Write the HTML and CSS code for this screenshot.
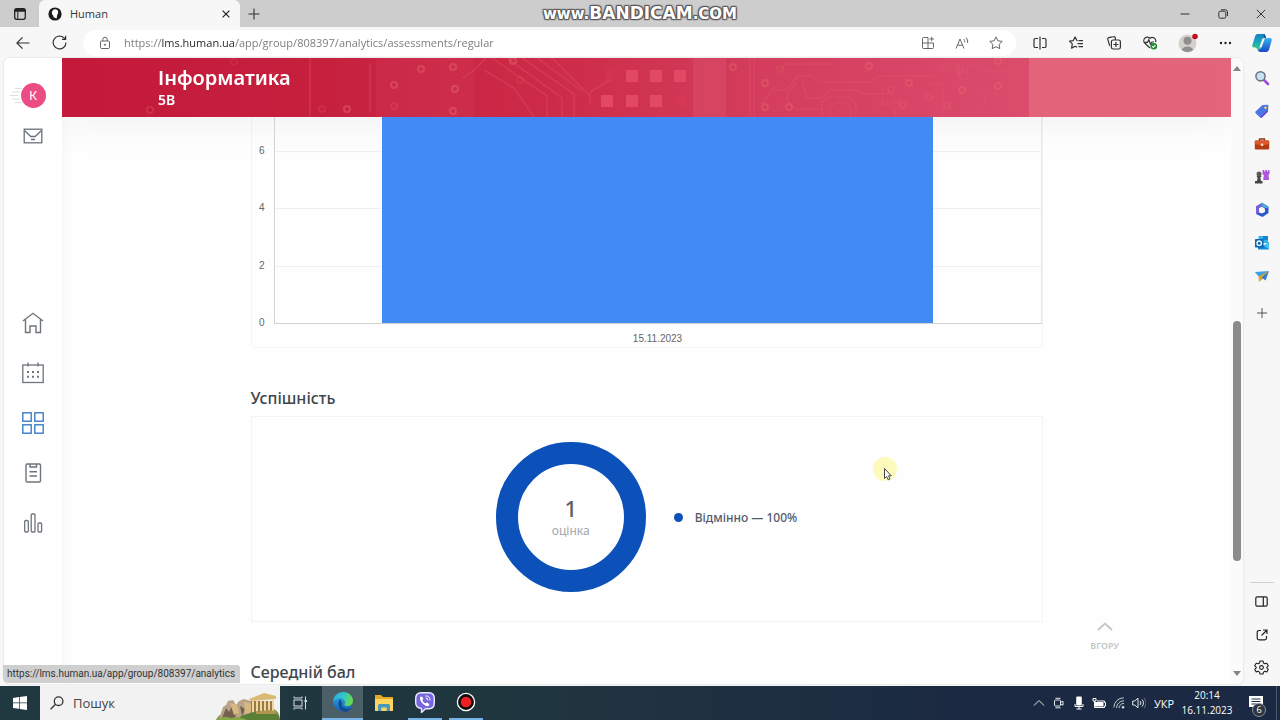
FILE: index.html
```html
<!DOCTYPE html>
<html lang="uk">
<head>
    <meta charset="UTF-8">
    <meta name="viewport" content="width=device-width, initial-scale=1.0">
    <title>Human</title>
    <link rel="stylesheet" href="styles.css">
</head>
<body>
    <div class="titlebar">
        <button class="tab-menu" aria-label="Меню вкладок">
            <svg width="14" height="14" viewBox="0 0 14 14"><rect x="1.7" y="1.7" width="10.6" height="10.6" rx="2" fill="none" stroke="#222" stroke-width="1.3"/><path d="M1.5 3.5a2 2 0 0 1 2-2h7a2 2 0 0 1 2 2v1.2h-11z" fill="#222"/><path d="M4.8 4v8" stroke="#222"/></svg>
        </button>
        <div class="tab">
            <svg width="14" height="14" viewBox="0 0 14 14"><circle cx="7" cy="7" r="6.6" fill="#1b1b1b"/><path d="M7 2.2c2.2 0 3.4 1.5 3.2 3.3-.2 1.600-1 2.100-1.200 3.300L8.700 11.400 5.600 10.300 5.400 8.700C4.300 8 3.800 7 3.900 5.500 4 3.500 5.200 2.200 7 2.200z" fill="#fff"/></svg>
            <span class="tab-title">Human</span>
            <button class="tab-close" aria-label="Закрити вкладку">
                <svg width="8" height="8" viewBox="0 0 8 8"><path d="M.6.6l6.800 6.800M7.400.6L.6 7.400" stroke="#222" stroke-width="1.200"/></svg>
            </button>
        </div>
        <button class="new-tab" aria-label="Нова вкладка">
            <svg width="12" height="12" viewBox="0 0 12 12"><path d="M6 .5v11M.5 6h11" stroke="#333" stroke-width="1.100"/></svg>
        </button>
        <div class="window-controls">
            <button aria-label="Згорнути"><svg width="10" height="10" viewBox="0 0 10 10"><path d="M.5 5h9" stroke="#333"/></svg></button>
            <button aria-label="Відновити"><svg width="10" height="10" viewBox="0 0 10 10" fill="none" stroke="#333"><rect x=".8" y="2.200" width="7" height="7" rx="1.500"/><path d="M3 .8h4.500a2 2 0 0 1 2 2V7"/></svg></button>
            <button aria-label="Закрити"><svg width="10" height="10" viewBox="0 0 10 10"><path d="M.8.800l8.400 8.400M9.200.8L.8 9.200" stroke="#333"/></svg></button>
        </div>
        <div class="watermark"><small>www.</small>BANDICAM<small>.COM</small></div>
    </div>

    <div class="toolbar">
        <button class="tool" aria-label="Назад"><svg width="14" height="14" viewBox="0 0 14 14" fill="none" stroke="#333" stroke-width="1.200"><path d="M13.500 7H1M6.500 1.300L.9 7l5.600 5.700"/></svg></button>
        <button class="tool" aria-label="Оновити"><svg width="15" height="15" viewBox="0 0 15 15" fill="none" stroke="#333" stroke-width="1.200"><path d="M14 7.500A6.400 6.400 0 1 1 11.600 2.500L13.300 4"/><path d="M13.600.7v3.600H10"/></svg></button>
        <div class="address">
            <svg width="14" height="14" viewBox="0 0 14 14" fill="none" stroke="#666"><rect x="2.500" y="5" width="9" height="7.500" rx="1.200"/><path d="M4.800 5V3.400a2.200 2.200 0 0 1 4.400 0V5"/><circle cx="7" cy="8.700" r=".6" fill="#666"/></svg>
            <input class="url" type="text" aria-label="Адреса" value="https://lms.human.ua/app/group/808397/analytics/assessments/regular">
            <button class="inner-tool" aria-label="Програми"><svg width="14" height="14" viewBox="0 0 14 14" fill="none" stroke="#666"><path d="M7 1.500H2.500a1 1 0 0 0-1 1v9a1 1 0 0 0 1 1h9a1 1 0 0 0 1-1V7H1.500M7 1.500v11M10.700.8v4.400M8.500 3h4.400"/></svg></button>
            <button class="inner-tool" aria-label="Читати вголос"><svg width="14" height="14" viewBox="0 0 14 14" fill="none" stroke="#666"><path d="M1 12.500L5 3l4 9.500M2.400 9.200h5.200M8.800 3.200a4 4 0 0 1 1 3M11 1.500a6.500 6.500 0 0 1 1.700 5.500"/></svg></button>
            <button class="inner-tool" aria-label="До вибраного"><svg width="14" height="14" viewBox="0 0 14 14" fill="none" stroke="#666"><path d="M7 .9l1.900 3.900 4.300.6-3.100 3 .7 4.300L7 10.700l-3.800 2 .7-4.300-3.100-3 4.300-.6z" stroke-linejoin="round"/></svg></button>
        </div>
        <div class="tools">
            <button class="tool" aria-label="Розділити екран"><svg width="14" height="14" viewBox="0 0 14 14" fill="none" stroke="#333" stroke-width="1.200"><path d="M5 2.500H2.300a1.300 1.300 0 0 0-1.300 1.300v6.400a1.300 1.300 0 0 0 1.300 1.300H5M9 2.500h2.700A1.300 1.300 0 0 1 13 3.800v6.400a1.300 1.300 0 0 1-1.300 1.300H9M7 .5v13"/></svg></button>
            <button class="tool" aria-label="Вибране"><svg width="15" height="14" viewBox="0 0 15 14" fill="none" stroke="#333" stroke-width="1.200"><path d="M8.600 4.600L7.900 4.500 6.100.9 4.300 4.600l-3.800.5 2.800 2.800-.7 4.200L6.100 10.300l2 1M9.500 4.600H14M8.500 7.600H14M9.500 10.600H14" stroke-linejoin="round"/></svg></button>
            <button class="tool" aria-label="Колекції"><svg width="14" height="14" viewBox="0 0 14 14" fill="none" stroke="#333" stroke-width="1.200"><rect x="4.400" y="4" width="9" height="9" rx="1.800"/><path d="M2.700 9.800L.8 3.400a1.500 1.500 0 0 1 1-1.800L6.500.7a1.500 1.500 0 0 1 1.800 1L8.500 4M8.900 6v5M6.400 8.500h5"/></svg></button>
            <button class="tool" aria-label="Основні засоби"><svg width="15" height="14" viewBox="0 0 15 14" fill="none" stroke="#333" stroke-width="1.200"><path d="M7 12L1.700 7A3.500 3.500 0 0 1 7 2.300 3.500 3.500 0 0 1 12.600 6M2 6.300h2.500l1.300-2.500L7.500 8.300 9 6h2"/><circle cx="10.800" cy="10.200" r="3.300" fill="#1b8a2b" stroke="none"/><path d="M9.200 10.200l1.200 1.200 2-2.200" stroke="#fff"/></svg></button>
            <button class="tool" aria-label="Профіль"><svg width="20" height="20" viewBox="0 0 20 20"><circle cx="9.500" cy="10.500" r="9" fill="#d4d1cd"/><circle cx="9.500" cy="7.800" r="4" fill="#918f8d"/><path d="M3.800 17a5.900 4.800 0 0 1 11.400 0 8.800 8.800 0 0 1-11.400 0z" fill="#918f8d"/><circle cx="17" cy="3.500" r="2.800" fill="#c50f1f"/></svg></button>
            <button class="tool" aria-label="Налаштування та інше"><svg width="14" height="4" viewBox="0 0 14 4" fill="#222"><circle cx="3" cy="2" r="1.200"/><circle cx="7.500" cy="2" r="1.200"/><circle cx="12" cy="2" r="1.200"/></svg></button>
            <button class="tool" aria-label="Copilot">
                <svg width="20" height="20" viewBox="0 0 20 20">
                    <defs>
                        <linearGradient id="cop-a" x2="0" y2="1"><stop stop-color="#187fc6"/><stop offset=".5" stop-color="#19a9bd"/><stop offset="1" stop-color="#3cc97a"/></linearGradient>
                        <linearGradient id="cop-b" x2="0" y2="1"><stop stop-color="#37b4ee"/><stop offset="1" stop-color="#1747c9"/></linearGradient>
                    </defs>
                    <path d="M5.500 1h6c1.500 0 1.300 1.200 1.600 2.500L8.500 15.500C8 17 7 18 5.500 16.500L4 14.500H2C.2 14.500 0 13 .5 11.500l2.500-8C3.500 2 4 1 5.500 1z" fill="url(#cop-a)"/>
                    <path d="M12.500 5H18c1.800 0 2 1.500 1.500 3l-2.300 8c-.5 1.800-1.500 3-3.200 3H8.500C7 19 6 18 5.500 16.500c1.700.8 2.700 0 3.200-1.500z" fill="url(#cop-b)"/>
                    <path d="M10.500 5.500l2.500-.5-3.500 9.500H7.300z" fill="#f7f7f7"/>
                    <path d="M11.500 1c1.700 0 2 1 2.500 4h-2z" fill="#164f9f"/>
                </svg>
            </button>
        </div>
    </div>

    <div class="workspace">
        <div class="page">
            <nav class="side-nav">
                <a class="profile" href="#" aria-label="Профіль">
                    <svg class="speed" width="12" height="17" viewBox="0 0 12 17" stroke="#dedede"><path d="M5 1.500h7M2 5h8M0 8.500h8M2 12h8M5 15.500h6"/></svg>
                    <span class="avatar">К</span>
                </a>
                <a class="mail" href="#" aria-label="Повідомлення"><svg width="20" height="16" viewBox="0 0 20 16" fill="none" stroke="#69727b" stroke-width="1.300"><rect x="1.200" y="1.200" width="17.600" height="13.600"/><path d="M1.500 2.500L7.800 8.500h4.400l6.300-6M8 11.500h4"/></svg></a>
                <ul class="nav-list">
                    <li><a href="#" aria-label="Головна"><svg width="22" height="22" viewBox="0 0 22 22" fill="none" stroke="#6d747b" stroke-width="1.400"><path d="M1 9L11 1.300 21 9M3.500 7.500v13H8V14h6v6.500h4.500v-13"/></svg></a></li>
                    <li><a href="#" aria-label="Календар"><svg width="22" height="22" viewBox="0 0 22 22" fill="none" stroke="#6d747b" stroke-width="1.300"><rect x=".8" y="3" width="20.400" height="17.500"/><path d="M6 .5v4M16 .5v4"/><path d="M5 10h2M10 10h2M15 10h2M5 14.700h2M10 14.700h2M15 14.700h2" stroke-width="2"/></svg></a></li>
                    <li><a href="#" aria-label="Групи"><svg width="22" height="22" viewBox="0 0 22 22" fill="none" stroke="#3b7cca" stroke-width="1.400"><rect x=".8" y=".8" width="8.400" height="8.400"/><rect x="12.800" y=".8" width="8.400" height="8.400"/><rect x=".8" y="12.800" width="8.400" height="8.400"/><rect x="12.800" y="12.800" width="8.400" height="8.400"/></svg></a></li>
                    <li><a href="#" aria-label="Завдання"><svg width="22" height="22" viewBox="0 0 22 22" fill="none" stroke="#6d747b" stroke-width="1.400"><rect x="4" y="2" width="14.500" height="18" rx="1.200"/><path d="M8 2v3h6.500V2M7.500 9.800h7.500M7.500 14h7.500"/></svg></a></li>
                    <li><a href="#" aria-label="Аналітика"><svg width="22" height="22" viewBox="0 0 22 22" fill="none" stroke="#6d747b" stroke-width="1.300"><rect x="2.700" y="8.500" width="3.600" height="11.500" rx="1"/><rect x="9.200" y="2" width="3.800" height="18" rx="1"/><rect x="16" y="11" width="3.600" height="9" rx="1"/></svg></a></li>
                </ul>
            </nav>

            <main class="content">
                <header class="banner">
                    <svg class="circuit" viewBox="0 0 1169 59" preserveAspectRatio="xMinYMid slice" fill="none">
                        <path d="M314 0h98v59h-98z" fill="#dc5271" opacity=".15"/>
                        <path d="M631 0h33v59h-33z" fill="#dc5271" opacity=".45"/>
                        <path d="M686 0h281v59H686z" fill="#d83c60" opacity=".35"/>
                        <path d="M967 0h202v59H967z" fill="#e4667c" opacity=".8"/>
                        <g stroke="#e05a6c" stroke-width="1.500" opacity=".35">
                            <path d="M248 0v59M308 5v50M688 0v59M692 0v59M948 0v59M955 0v59"/>
                            <path d="M422 12l30 18 20 29M430 0l55 38v21M445 0l55 40v19M460 0l52 36v23M475 0l45 33"/>
                            <path d="M412 12l12-12M412 12l-12 8M490 0l38 38M528 34l20-12M528 34v12"/>
                            <path d="M700 46l10-14h14l12-14h14l8 6h50l8-6h58l9-12h14v15h8V8h14l5 5h22"/>
                            <path d="M718 11l6-5h46M735 25l-10 10v8l8 8h25M740 23l5 17h14l10-8h25l10 4h26l5 8M820 30v15h15l8 6-8 6"/>
                            <path d="M760 59V45l6-6h22l6 8v12M768 59V49l6-4h10l5 6v8M861 26h20v33M817 47h14l3 12M838 40l-2 12M908 33h15v12l-5 6h-16l-4 8M936 33l-5 17-5 9"/>
                        </g>
                        <g stroke="#e5636a" stroke-width="2" opacity=".5">
                            <circle cx="88" cy="52" r="3" fill="#a81c2c" opacity=".6"/><circle cx="172" cy="4" r="3" opacity=".3"/><circle cx="210" cy="18" r="3" opacity=".3"/><circle cx="260" cy="51" r="3" opacity=".4"/><circle cx="285" cy="51" r="3"/><circle cx="332" cy="27" r="3"/><circle cx="332" cy="48" r="3" opacity=".5"/><circle cx="359" cy="11" r="3"/><circle cx="391" cy="9" r="3"/><circle cx="393" cy="31" r="3"/><circle cx="391" cy="53" r="3"/><circle cx="451" cy="3" r="3"/><circle cx="458" cy="22" r="3" opacity=".4"/>
                            <circle cx="671" cy="9" r="3"/><circle cx="703" cy="25" r="3"/><circle cx="703" cy="49" r="3"/><circle cx="727" cy="49" r="3"/><circle cx="718" cy="11" r="3" opacity=".5"/><circle cx="807" cy="8" r="3"/><circle cx="829" cy="31" r="3" opacity=".6"/><circle cx="847" cy="25" r="3"/><circle cx="898" cy="13" r="3" opacity=".6"/><circle cx="900" cy="32" r="3"/><circle cx="936" cy="28" r="3"/><circle cx="936" cy="3" r="3"/><circle cx="867" cy="39" r="3" opacity=".6"/><circle cx="841" cy="47" r="3" opacity=".6"/><circle cx="885" cy="48" r="3" opacity=".6"/>
                        </g>
                        <path d="M564 12h12v12h-12zM588 12h12v12h-12zM612 12h12v12h-12zM539 37h12v12h-12zM564 37h12v12h-12zM588 37h12v12h-12z" fill="#e8506a" opacity=".75"/>
                        <path d="M614 37h10v12h-10zM543 12h8v12h-8z" fill="#e03a54" opacity=".3"/>
                    </svg>
                    <h1>Інформатика</h1>
                    <p>5В</p>
                </header>

                <div class="column">
                    <section class="card chart">
                        <ul class="scale">
                            <li>6</li>
                            <li>4</li>
                            <li>2</li>
                            <li>0</li>
                        </ul>
                        <div class="plot">
                            <div class="grid">
                                <i></i>
                                <i></i>
                                <i></i>
                            </div>
                            <div class="bar" style="width: 72%"></div>
                        </div>
                        <span class="date">15.11.2023</span>
                    </section>

                    <h2>Успішність</h2>
                    <section class="card success">
                        <div class="donut">
                            <strong>1</strong>
                            <span>оцінка</span>
                        </div>
                        <div class="legend"><i class="dot"></i>Відмінно — 100%</div>
                    </section>

                    <h2>Середній бал</h2>
                </div>

                <button class="to-top">
                    <svg width="16" height="9" viewBox="0 0 16 9" fill="none" stroke="#c3c8ca" stroke-width="2"><path d="M1 8l7-6.500L15 8"/></svg>
                    ВГОРУ
                </button>
            </main>

            <div class="scrollbar">
                <svg width="8" height="5" viewBox="0 0 8 5"><path d="M0 5l4-5 4 5z" fill="#858585"/></svg>
                <div class="track"><div class="thumb"></div></div>
                <svg width="8" height="5" viewBox="0 0 8 5"><path d="M0 0l4 5 4-5z" fill="#858585"/></svg>
            </div>
        </div>

        <aside class="edge-bar">
            <button aria-label="Пошук"><svg width="16" height="16" viewBox="0 0 16 16"><path d="M10 10l4 4" stroke="#a34bd6" stroke-width="2.600" stroke-linecap="round"/><circle cx="6.500" cy="6.300" r="4.600" fill="#c4e2f2" stroke="#66717b" stroke-width="1.500"/></svg></button>
            <button aria-label="Покупки"><svg width="16" height="16" viewBox="0 0 16 16"><path d="M1.500 8.500L8.500 2l5-.3c.6 0 .9.3.9.9l-.4 5.400-6.500 6.500c-.5.500-1 .4-1.400 0L1.500 10c-.4-.5-.4-1 0-1.500z" fill="#4a75e6"/><path d="M6.500 14l7.500-7-.3 2-6.200 6z" fill="#6a3ed4"/><circle cx="11.500" cy="4.800" r="1.300" fill="#ffd15c"/></svg></button>
            <button aria-label="Інструменти"><svg width="16" height="16" viewBox="0 0 16 16"><path d="M5.500 5V3h5v2" fill="none" stroke="#8b3513" stroke-width="1.300"/><rect x=".8" y="4.500" width="14.400" height="9" rx="1.200" fill="#b53c12"/><path d="M.8 5.700a1.200 1.200 0 0 1 1.200-1.200h12a1.200 1.200 0 0 1 1.200 1.200V8L8 9.500.8 8z" fill="#d9592a"/><rect x="6.800" y="7.500" width="2.400" height="2.500" rx=".5" fill="#f6d9b8"/></svg></button>
            <button aria-label="Ігри"><svg width="16" height="16" viewBox="0 0 16 16"><path d="M8.500 1h1.700v1.500h1.100V1h1.700v1.500h1V1h1.500v4l-1 1 .6 5H9.200l.6-5-1.300-1z" fill="#ae56dc"/><circle cx="5" cy="5" r="2.500" fill="#5d5a58"/><path d="M2.800 7h4.400v1.200H6.300L7 12h1.500v2.500h-7.500V12H3l.7-3.800h-.9z" fill="#484644"/></svg></button>
            <button aria-label="Microsoft 365"><svg width="16" height="16" viewBox="0 0 16 16"><path d="M8 .8l5.500 3.200L10 8 8 4.800 5 6.200v5L2 12V4.300z" fill="#7a5fd6"/><path d="M13.500 4l1 1v6L8.500 15 2 12l3-1.500 3 1 3-1.700V6L8 4.800z" fill="#2b58c8"/><path d="M8 .8l6 3.500-.5 2L11 6 8 4.800z" fill="#49a8de"/><path d="M8 5l2.700 1.500v3L8 11 5.300 9.500v-3z" fill="#f7f7f7"/></svg></button>
            <button aria-label="Outlook"><svg width="16" height="16" viewBox="0 0 16 16"><path d="M4.500 1H14v7H4.500z" fill="#36b0ec"/><path d="M9 1h5v4H9z" fill="#1685cf"/><path d="M4 7l6 3.500L15 7v7.500H4z" fill="#1689d2"/><path d="M15 7v7.500L9.500 10.500z" fill="#45c4f2"/><rect x="1" y="4" width="8.500" height="8.500" rx=".8" fill="#0867b2"/><circle cx="5.200" cy="8.200" r="2.200" fill="none" stroke="#fff" stroke-width="1.300"/></svg></button>
            <button aria-label="Надіслати"><svg width="16" height="16" viewBox="0 0 16 16"><path d="M.8 4l14.200-1L5 9z" fill="#3ba3e3"/><path d="M15 3L4.500 8.500 5 14l4-3.500z" fill="#e2a32c"/><path d="M15 3l-3.500 9.500-4-3z" fill="#2b7fce"/></svg></button>
            <button class="add" aria-label="Додати"><svg width="10" height="10" viewBox="0 0 10 10"><path d="M5 0v10M0 5h10" stroke="#555"/></svg></button>
            <div class="edge-bottom">
                <button aria-label="Бічна панель"><svg width="13" height="13" viewBox="0 0 13 13" fill="none" stroke="#222" stroke-width="1.200"><rect x=".8" y="1.800" width="11.400" height="9.400" rx="1.500"/><path d="M8.300 2v9"/></svg></button>
                <button aria-label="Відкрити посилання"><svg width="12" height="12" viewBox="0 0 12 12" fill="none" stroke="#222" stroke-width="1.200"><path d="M5 1.500H3A1.800 1.800 0 0 0 1.200 3.300V9A1.800 1.800 0 0 0 3 10.800h5.700A1.800 1.800 0 0 0 10.500 9V7M7 1h4v4M11 1L5.500 6.500"/></svg></button>
                <button aria-label="Налаштування"><svg width="15" height="15" viewBox="0 0 15 15" fill="none" stroke="#222" stroke-width="1.100"><path d="M6 1h3l.5 2 1.300.8 2-.6 1.500 2.600L12.800 7.300v.6l1.500 1.400-1.500 2.600-2-.6-1.300.8L9 14H6l-.5-1.900-1.300-.8-2 .6L.7 9.300l1.500-1.400v-.7L.7 5.800l1.500-2.600 2 .6L5.500 3z" stroke-linejoin="round"/><circle cx="7.500" cy="7.500" r="1.900"/></svg></button>
            </div>
        </aside>

        <div class="status">https://lms.human.ua/app/group/808397/analytics</div>
    </div>

    <div class="taskbar">
        <button class="start" aria-label="Пуск"><svg width="14" height="14" viewBox="0 0 14 14" fill="#fff"><path d="M0 2l6-.9v5.500H0zM6.700 1L14 0v6.600H6.700zM0 7.300h6v5.500L0 12zM6.700 7.300H14V14l-7.300-1z"/></svg></button>
        <label class="search">
            <svg width="14" height="14" viewBox="0 0 14 14" fill="none" stroke="#333" stroke-width="1.300"><circle cx="8.600" cy="5.200" r="4.300"/><path d="M5.500 8.300L.6 13.300"/></svg>
            <input type="text" aria-label="Пошук" placeholder="Пошук">
            <svg class="acropolis" width="64" height="28" viewBox="0 0 64 28">
                <path d="M0 28c3-7 10-8 18-7l20-6 18 1c5 2 8 6 8 12z" fill="#80934a"/>
                <path d="M3 27l4-12 3-2 2-4 5-1 3 5 3-4 5-2 10 3v12l-14 4z" fill="#b8a288"/>
                <path d="M6 26l4-10 3 4 4-8 4 7-2 7zM24 14l5 3-3 7z" fill="#75604f"/>
                <path d="M14 11l7 2 2 8-5 2zM28 10l9 2v8l-8 2z" fill="#d6b982"/>
                <path d="M33 7l15-6 12 3v3l-25 2z" fill="#d9b973"/>
                <path d="M35 9h23v12H35z" fill="#9a7849"/>
                <path d="M37 9v12M41 9v12M45 9v12M49 9v12M53 9v12M57 8v13" stroke="#f0d79c" stroke-width="2"/>
                <path d="M22 28c2-6 9-5 12-7 8-3 16 0 20-2 6 1 9 4 10 9z" fill="#5a8037"/>
                <path d="M40 22h20v-3l-7-1-13 2z" fill="#b1964f"/>
                <path d="M0 28c3-3 10-4 15-2 7-2 13 0 16 2z" fill="#86a945"/>
            </svg>
        </label>
        <button class="task" aria-label="Подання завдань"><svg width="15" height="14" viewBox="0 0 15 14" fill="none" stroke="#d8dde0"><rect x="1" y="4" width="8" height="6"/><path d="M1 .5V2h8V.5M1 13.500V12h8v1.500M12.500.5v13"/><path d="M11.500 5h2.500" stroke-width="2"/></svg></button>
        <button class="task active" aria-label="Microsoft Edge">
            <svg width="22" height="22" viewBox="0 0 22 22">
                <defs>
                    <linearGradient id="edge-a" x2="1" y2=".3"><stop stop-color="#2aa8e0"/><stop offset=".55" stop-color="#32c6ca"/><stop offset="1" stop-color="#62d957"/></linearGradient>
                    <linearGradient id="edge-b" x2="0" y2="1"><stop stop-color="#29a2e2"/><stop offset="1" stop-color="#1261b7"/></linearGradient>
                </defs>
                <path d="M1 11C1 7 6 5 10 6c3 1 3.500 4 2.500 6-.8 2.500 3 4.500 7.500 2.500A10 10 0 0 1 1 11z" fill="url(#edge-b)"/>
                <path d="M1 10.500C1.500 5 5.700 1 11 1c6 0 10 4.200 10 8.700 0 3.300-2.600 5.400-5.700 5.400-2.400 0-3.600-1-2.700-2.300 1-1.500.3-5.300-4.200-5.500C4.800 7.200 2 8.500 1 10.500z" fill="url(#edge-a)"/>
                <path d="M8.500 8c-4 3.700-2.300 10.600 3.700 13 3 0 6-1.800 7.600-4.500-5.500 2.700-11 .3-10-4.200z" fill="#134a92"/>
            </svg>
        </button>
        <button class="task" aria-label="Файловий провідник"><svg width="20" height="18" viewBox="0 0 20 18"><path d="M1 1h6l2 2h10v14H1z" fill="#e9a928"/><path d="M1 5h18v12H1z" fill="#fbd55e"/><path d="M4 17v-5.500A1.500 1.500 0 0 1 5.500 10h9a1.500 1.500 0 0 1 1.500 1.500V17h-3.300v-3.500H7.300V17z" fill="#4898bd"/></svg></button>
        <button class="task running" aria-label="Viber"><svg width="20" height="21" viewBox="0 0 20 21"><path d="M6 .8h8c3.500 0 5.300 2 5.300 6v4c0 4-2 6-5.300 6h-3.500L6.500 20.500v-4C2.500 16 .7 14 .7 10.800v-4c0-4 1.900-6 5.300-6z" fill="#7567de" stroke="#eceaff" stroke-width="1.400"/><path d="M6 4.500c-1.500 1-1.300 2.500-.5 4 1.500 3 3.500 4.700 6.300 5.800 1 .3 2.500-.8 2.500-1.800 0-.7-1.800-2-2.500-2-.6 0-1 1-1.600.8C8.800 10.700 7.800 9.500 7.500 8c0-.6 1-.9.9-1.500C8.300 6 6.800 4.200 6 4.500z" fill="#fff"/><path d="M10.500 4a4 4 0 0 1 4.500 4.500M10.700 6.200a2 2 0 0 1 2.100 2.200" fill="none" stroke="#fff"/></svg></button>
        <button class="task running" aria-label="Bandicam"><svg width="20" height="20" viewBox="0 0 20 20"><circle cx="10" cy="10" r="8.600" fill="#100c0c" stroke="#fff" stroke-width="1.300"/><circle cx="10" cy="10" r="5.300" fill="#ed2024"/></svg></button>
        <div class="tray">
            <button aria-label="Приховані піктограми"><svg width="12" height="12" viewBox="0 0 12 12" fill="none" stroke="#e3e6ea"><path d="M1 8.500l5-5 5 5"/></svg></button>
            <button aria-label="Камера"><svg width="12" height="12" viewBox="0 0 12 12" fill="none" stroke="#e3e6ea"><rect x="1.500" y="3" width="6" height="6" rx="1"/><path d="M8 5.200l2-1v4l-2-1M2.500 1.300h5M2.500 10.800h5"/></svg></button>
            <button aria-label="Мікрофон"><svg width="12" height="14" viewBox="0 0 12 14" fill="#fff"><rect x="3.200" y=".5" width="5.600" height="9" rx="1"/><path d="M2 8v2.500h8V8M6 10.500V13M3.500 13h5" fill="none" stroke="#fff"/></svg></button>
            <button aria-label="Акумулятор"><svg width="14" height="10" viewBox="0 0 14 10" fill="#fff"><path d="M3 4h8.500v4.500H3z"/><path d="M1 .5h3v2.500H1zM2.500 3v6.500H12.500V8h1V4.500h-1V3H5" fill="none" stroke="#fff"/></svg></button>
            <button aria-label="Мережа"><svg width="12" height="12" viewBox="0 0 12 12" fill="none" stroke="#c4cad2"><path d="M.8 10.500A10 10 0 0 1 10.800.8M3.500 11A7.500 7.500 0 0 1 11 3.700M6 11.200a5 5 0 0 1 5-4.900"/><circle cx="10" cy="10.200" r="1" fill="#fff"/></svg></button>
            <button aria-label="Гучність"><svg width="14" height="12" viewBox="0 0 14 12" fill="none" stroke="#e3e6ea"><path d="M.7 4h2L6 1.200v9.600L2.700 8h-2zM8 4a3 3 0 0 1 0 4M10 2.500a5 5 0 0 1 0 7"/><path d="M12 1a7 7 0 0 1 0 10" opacity=".4"/></svg></button>
            <button class="lang">УКР</button>
            <button class="clock"><time>20:14</time><time>16.11.2023</time></button>
            <button class="notes" aria-label="Сповіщення">
                <svg width="14" height="14" viewBox="0 0 14 14"><path d="M0 0h14v11H6.500L4 13.500V11H0z" fill="#fff"/><path d="M2.500 3h9M2.500 5.500h9M2.500 8h5" stroke="#1c2c41"/></svg>
                <span class="badge">6</span>
            </button>
        </div>
    </div>

    <svg class="pointer" width="26" height="26" viewBox="0 0 26 26"><circle cx="13" cy="12" r="12" fill="#fbf9b0" opacity=".85"/><path d="M12.500 11.500v10l2.200-2 1.500 3.300 1.800-.8-1.500-3.200h2.800z" fill="#fff" stroke="#333" stroke-width=".9"/></svg>
</body>
</html>
```

FILE: styles.css
```css
* {
    box-sizing: border-box;
}
body {
    margin: 0;
    height: 100vh;
    display: flex;
    flex-direction: column;
    overflow: hidden;
    background: #f7f7f7;
    font-family: "Noto Sans", "Open Sans", sans-serif;
    color: #3f454c;
}
button {
    display: flex;
    align-items: center;
    justify-content: center;
    padding: 0;
    border: 0;
    background: none;
    font: inherit;
    color: inherit;
    cursor: pointer;
}
a {
    color: inherit;
    text-decoration: none;
}
input {
    min-width: 0;
    padding: 0;
    border: 0;
    outline: 0;
    background: none;
    font: inherit;
}
ul {
    margin: 0;
    padding: 0;
    list-style: none;
}
svg {
    display: block;
    flex: none;
}

/* browser window */
.titlebar {
    position: relative;
    display: flex;
    flex: none;
    height: 27px;
    background: #cdcdcd;
}
.tab-menu {
    width: 39px;
}
.tab {
    display: flex;
    align-items: center;
    width: 201px;
    padding: 0 10px 0 9px;
    border-radius: 6px 6px 0 0;
    background: #f7f7f7;
    color: #333;
    font-family: "Open Sans", sans-serif;
    font-size: 11px;
}
.tab-title {
    flex: 1;
    margin-left: 8px;
}
.tab-close {
    width: 8px;
    height: 20px;
}
.new-tab {
    width: 28px;
}
.window-controls {
    display: flex;
    margin-left: auto;
}
.window-controls button {
    width: 38px;
}
.watermark {
    position: absolute;
    left: 50%;
    top: 2px;
    transform: translateX(-50%);
    font: bold 17px/22px "DejaVu Sans", sans-serif;
    color: #fff;
    white-space: nowrap;
    text-shadow: 1px 1px 1px #555, -1px -1px 1px #555, 1px -1px 1px #555, -1px 1px 1px #555, 0 0 2px #555;
}
.watermark small {
    font-size: 15px;
}
.toolbar {
    display: flex;
    align-items: center;
    flex: none;
    height: 31px;
    padding-left: 4px;
}
.tool {
    width: 37px;
    height: 30px;
}
.tools {
    display: flex;
    margin-left: 5px;
}
.address {
    display: flex;
    align-items: center;
    flex: 1;
    height: 26px;
    margin-left: 5px;
    padding: 0 3px 0 15px;
    border-radius: 13px;
    background: #fff;
}
.url {
    flex: 1;
    margin-left: 12px;
    background: linear-gradient(90deg, #777 38px, #222 38px, #222 110px, #777 110px);
    -webkit-background-clip: text;
    background-clip: text;
    color: transparent;
    font-family: "Open Sans", sans-serif;
    font-size: 11px;
}
.inner-tool {
    width: 34px;
    height: 26px;
}
.workspace {
    position: relative;
    display: flex;
    flex: 1;
    min-height: 0;
    padding-left: 4px;
}
.page {
    display: flex;
    flex: 1;
    margin-bottom: 2px;
    border-radius: 6px;
    overflow: hidden;
    background: #fefefe;
    box-shadow: 0 0 2px #ccc;
}

/* left menu */
.side-nav {
    display: flex;
    flex-direction: column;
    align-items: center;
    flex: none;
    width: 58px;
    padding-top: 25px;
    background: #fff;
    box-shadow: 4px 0 10px rgba(0, 0, 0, 0.03);
}
.profile {
    position: relative;
}
.avatar {
    display: block;
    width: 25px;
    border-radius: 50%;
    background: #eb4c84;
    color: #fff;
    font-size: 13px;
    line-height: 25px;
    text-align: center;
}
.speed {
    position: absolute;
    right: 24px;
    top: 4px;
}
.mail {
    display: flex;
    align-items: center;
    height: 36px;
    margin-top: 10px;
}
.nav-list {
    margin-top: 144px;
}
.nav-list a {
    display: flex;
    align-items: center;
    justify-content: center;
    width: 58px;
    height: 50px;
}

/* group page */
.content {
    position: relative;
    flex: 1;
    overflow: hidden;
}
.banner {
    position: relative;
    height: 59px;
    padding: 7px 96px 0;
    background: linear-gradient(90deg, #c3193a, #c61f3e 20%, #cd2b49 42%, #d23b58 57%, #db5070 78%, #e0637a);
    box-shadow: 0 8px 40px rgba(0, 0, 0, 0.05);
    color: #fff;
}
.circuit {
    position: absolute;
    left: 0;
    top: 0;
    width: 100%;
    height: 100%;
}
.banner h1,
.banner p {
    position: relative;
    margin: 0;
    font-weight: 600;
}
.banner h1 {
    font-size: 20px;
    line-height: 26px;
}
.banner p {
    font-size: 14px;
    line-height: 18px;
}
.column {
    max-width: 792px;
    margin: 0 auto;
}
.column h2 {
    margin: 0;
    padding: 38px 0 6px;
    font-size: 16px;
    font-weight: 500;
    line-height: 24px;
}
.card {
    border: 1px solid #f3f3f3;
    border-radius: 5px;
}
.chart {
    display: grid;
    grid-template-columns: 22px 1fr;
    border-top: 0;
    border-radius: 0 0 5px 5px;
    color: #666;
    font: 10px/16px "Liberation Sans", sans-serif;
}
.scale {
    display: flex;
    flex-direction: column;
    justify-content: space-between;
    height: 214px;
    padding: 26px 9px 0 0;
    text-align: right;
}
.plot {
    position: relative;
    display: flex;
    justify-content: center;
    height: 207px;
    border: solid #d3d3d3;
    border-width: 0 1px 1px;
    border-right-color: #e6e6e6;
}
.grid {
    position: absolute;
    inset: 34px 0 0;
    display: grid;
}
.grid i {
    border-top: 1px solid #efefef;
}
.bar {
    position: relative;
    background: #428af6;
}
.date {
    grid-column: 2;
    text-align: center;
}
.success {
    display: flex;
    align-items: center;
    justify-content: center;
    height: 206px;
    padding-bottom: 4px;
    border-radius: 0;
}
.donut {
    display: flex;
    flex-direction: column;
    align-items: center;
    justify-content: center;
    width: 150px;
    height: 150px;
    border: 22px solid #0c51b9;
    border-radius: 50%;
}
.donut strong {
    color: #5d6064;
    font-size: 22px;
    font-weight: 500;
    line-height: 28px;
}
.donut span {
    color: #a3a8ad;
    font-size: 12px;
    line-height: 18px;
}
.legend {
    display: flex;
    align-items: center;
    margin-left: 28px;
    color: #535b6a;
    font-size: 12px;
    font-weight: 500;
}
.dot {
    width: 9px;
    height: 9px;
    margin-right: 12px;
    border-radius: 50%;
    background: #0c51b9;
}
.to-top {
    position: absolute;
    right: 112px;
    bottom: 32px;
    flex-direction: column;
    gap: 9px;
    color: #c3c8ca;
    font-size: 9px;
    font-weight: 600;
    line-height: 12px;
}
.scrollbar {
    display: flex;
    flex-direction: column;
    align-items: center;
    width: 12px;
    padding: 8px 0;
    background: #fbfbfb;
}
.track {
    display: flex;
    flex-direction: column;
    flex: 1;
    width: 8px;
    margin: 7px 0;
}
.track::before {
    content: "";
    flex: 243;
}
.track::after {
    content: "";
    flex: 103;
}
.thumb {
    flex: 240;
    border-radius: 4px;
    background: #8b8b8b;
}
.status {
    position: absolute;
    left: 3px;
    bottom: 3px;
    padding: 0 5px 0 4px;
    border-radius: 0 3px 0 5px;
    background: #cfcfcf;
    color: #333;
    font: 10px/18px Roboto, sans-serif;
}

/* browser side panel */
.edge-bar {
    display: flex;
    flex-direction: column;
    flex: none;
    width: 37px;
    padding: 3px 0 2px;
}
.edge-bar button {
    width: 37px;
    height: 33px;
}
.edge-bar .add {
    margin-top: 4px;
}
.edge-bottom {
    margin-top: auto;
}
.edge-bottom::before {
    content: "";
    display: block;
    width: 24px;
    height: 1px;
    margin: 0 auto 2px;
    background: #cfcfcf;
}

/* system taskbar */
.taskbar {
    display: flex;
    flex: none;
    height: 34px;
    background: linear-gradient(90deg, #20383f, #20363f 40%, #1b2a42 75%);
    color: #fff;
    font-family: "Open Sans", sans-serif;
}
.start {
    width: 40px;
}
.search {
    display: flex;
    align-items: center;
    width: 240px;
    padding-left: 10px;
    background: #f2f2f2;
}
.search input {
    flex: 1;
    margin-left: 9px;
    font-size: 13px;
}
.search input::placeholder {
    color: #444;
    opacity: 1;
}
.acropolis {
    align-self: flex-end;
}
.task {
    width: 41px;
}
.active {
    margin-left: 1px;
    background: #4a6066;
}
.active,
.running {
    border-bottom: 2px solid #76b3e6;
}
.running {
    width: 34px;
    margin: 0 3px 0 4px;
}
.tray {
    display: flex;
    margin-left: auto;
    padding-right: 3px;
    font-size: 11px;
}
.tray button {
    width: 20px;
}
.tray .lang {
    width: 30px;
}
.tray .clock {
    flex-direction: column;
    width: 56px;
    font-size: 10px;
    line-height: 15px;
}
.tray .notes {
    position: relative;
    width: 42px;
    border-right: 1px solid #4b586a;
}
.badge {
    position: absolute;
    right: 10px;
    bottom: 3px;
    width: 14px;
    border: 1px solid #8b929c;
    border-radius: 50%;
    background: #2c3541;
    font-size: 9px;
    line-height: 12px;
}
.pointer {
    position: absolute;
    left: 872px;
    top: 457px;
    pointer-events: none;
}
```
